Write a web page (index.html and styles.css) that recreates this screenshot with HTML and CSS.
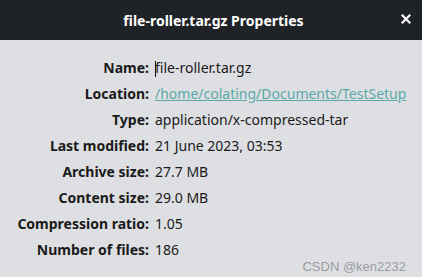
FILE: index.html
```
<!DOCTYPE html>
<html>
<head>
<meta charset="utf-8">
<link rel="stylesheet" href="styles.css">
</head>
<body>
<div class="window">
  <div class="titlebar">
    <span class="title">file-roller.tar.gz Properties</span>
    <span class="close">
      <svg width="10" height="10" viewBox="0 0 10 10"><path d="M1.5 1.5 L8.5 8.5 M8.5 1.5 L1.5 8.5" stroke="#ffffff" stroke-width="2.2" stroke-linecap="square"/></svg>
    </span>
  </div>
  <div class="content">
    <div class="props">
      <div class="label">Name:</div><div class="value"><span class="cursor"></span>file-roller.tar.gz</div>
      <div class="label">Location:</div><div class="value"><span class="link">/home/colating/Documents/TestSetup</span></div>
      <div class="label">Type:</div><div class="value">application/x-compressed-tar</div>
      <div class="label">Last modified:</div><div class="value">21 June 2023, 03:53</div>
      <div class="label">Archive size:</div><div class="value">27.7 MB</div>
      <div class="label">Content size:</div><div class="value">29.0 MB</div>
      <div class="label">Compression ratio:</div><div class="value">1.05</div>
      <div class="label">Number of files:</div><div class="value">186</div>
    </div>
    <div class="watermark">CSDN @ken2232</div>
  </div>
</div>
</body>
</html>
```
FILE: styles.css
```
html, body {
  margin: 0;
  padding: 0;
}
body {
  width: 422px;
  height: 277px;
  overflow: hidden;
  background: #dedfe3;
  font-family: "Noto Sans", sans-serif;
}
.window {
  display: flex;
  flex-direction: column;
  height: 277px;
}
.titlebar {
  height: 40px;
  background: #1f2327;
  display: flex;
  align-items: center;
  justify-content: center;
  position: relative;
}
.title {
  color: #ffffff;
  font-weight: bold;
  font-size: 14px;
  margin-left: 5px;
}
.close {
  position: absolute;
  right: 11px;
  top: 14px;
  display: flex;
}
.content {
  flex: 1;
  position: relative;
  padding-top: 15px;
}
.props {
  display: grid;
  grid-template-columns: 149px auto;
  column-gap: 6px;
  grid-auto-rows: 26px;
  font-size: 14px;
  color: #1a1a1a;
}
.label {
  font-weight: bold;
  text-align: right;
  line-height: 26px;
}
.value {
  line-height: 26px;
  position: relative;
}
.cursor {
  position: absolute;
  left: 0;
  top: 6px;
  width: 1px;
  height: 16px;
  background: #111;
}
.link {
  color: #5aa9a8;
  text-decoration: underline;
}
.watermark {
  position: absolute;
  right: 16px;
  bottom: 3px;
  font-family: "Liberation Sans", sans-serif;
  font-size: 13px;
  color: #9a9ca0;
}
```
